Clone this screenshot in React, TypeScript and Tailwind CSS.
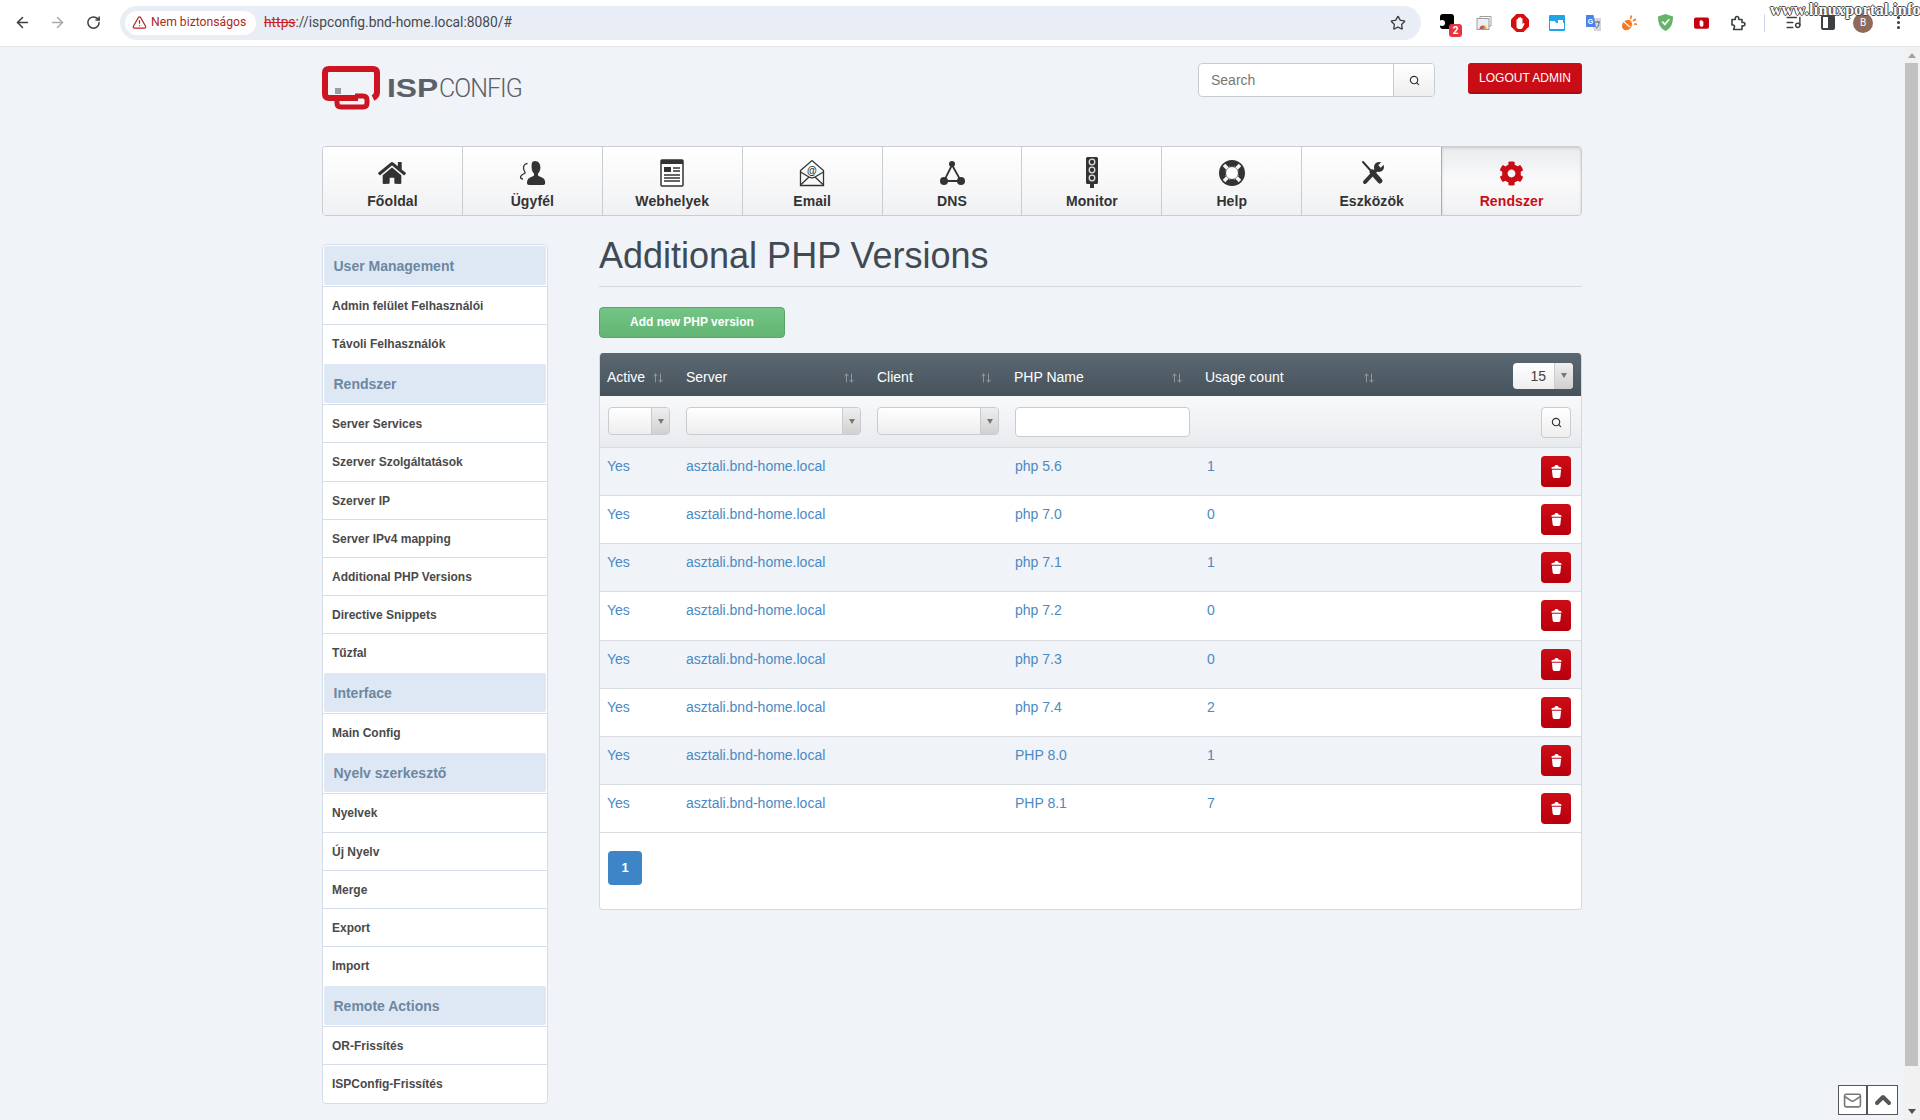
import { ArrowLeft, ArrowRight, RotateCw, Star, Search, TriangleAlert, ArrowUpDown, EllipsisVertical, ListMusic, Mail, ChevronUp } from "lucide-react";
import { FaHome, FaCog } from "react-icons/fa";
import type { ReactNode } from "react";

function UsersIcon() {
  return (
    <svg viewBox="0 0 28 28" className="w-[28px] h-[28px]" fill="#333">
      <path d="M17 2c3.4 0 5.4 2.8 5.4 6.4 0 2.6-1 4.8-2.4 6.2v1.6c0 1 3.2 1.6 5.2 3 1.4 1 2 2.6 2 4.8 0 1.2-.8 2-2 2H11c-1.2 0-2-.8-2-2 0-2.2.6-3.8 2-4.800 2-1.400 5-2 5-3v-1.600c-1.400-1.400-2.400-3.600-2.400-6.200C13.600 4.800 13.600 2 17 2z" />
      <path d="M9.500 4.500C7 4.500 5.500 6.500 5.500 9c0 1.800.7 3.200 1.500 4.200v1c-1.800 1-4.500 1.800-4.500 4 0 1.200 1 1.800 2.500 1.800" fill="none" stroke="#333" strokeWidth="1.300" />
    </svg>
  );
}

function WebIcon() {
  return (
    <svg viewBox="0 0 24 28" className="w-[24px] h-[28px]">
      <rect x="1" y="1" width="22" height="26" rx="1" fill="#fff" stroke="#333" strokeWidth="1.500" />
      <rect x="1" y="1" width="22" height="4" fill="#333" />
      <rect x="4" y="8" width="7" height="5" fill="#333" />
      <path d="M13 9h7M13 12h7M4 16h16M4 19h16M4 22h16" stroke="#333" strokeWidth="1.500" />
    </svg>
  );
}

function EmailIcon() {
  return (
    <svg viewBox="0 0 26 28" className="w-[26px] h-[28px]" fill="none" stroke="#333" strokeWidth="1.300">
      <path d="M1.500 11.500 13 1.500l11.500 10V26.500h-23z" />
      <path d="M1.500 26 10 18M24.500 26 16 18M1.500 13 10 18c2 1.200 4 1.200 6 0l8.500-5" />
      <text x="13" y="14.500" textAnchor="middle" fontSize="10" fontWeight="700" fontFamily="Liberation Sans" fill="#333" stroke="none">@</text>
    </svg>
  );
}

function DnsIcon() {
  return (
    <svg viewBox="0 0 28 28" className="w-[28px] h-[28px]" fill="#333">
      <path d="M14 6 6 22h17z" fill="none" stroke="#333" strokeWidth="1.800" />
      <circle cx="14" cy="5" r="3" />
      <circle cx="6" cy="22" r="4" />
      <circle cx="23" cy="22" r="4" />
    </svg>
  );
}

function TrafficIcon() {
  return (
    <svg viewBox="0 0 14 32" className="w-[14px] h-[32px]">
      <rect x="1" y="0" width="12" height="27" rx="1.500" fill="#333" />
      <rect x="5" y="27" width="4" height="4" fill="#333" />
      <circle cx="7" cy="5" r="2.800" fill="none" stroke="#ddd" strokeWidth="1.300" />
      <circle cx="7" cy="13" r="2.800" fill="none" stroke="#ddd" strokeWidth="1.300" />
      <circle cx="7" cy="21" r="2.800" fill="none" stroke="#ddd" strokeWidth="1.300" />
    </svg>
  );
}

function LifeRingIcon() {
  return (
    <svg viewBox="0 0 26 26" className="w-[26px] h-[26px]">
      <circle cx="13" cy="13" r="10" fill="#fff" stroke="#333" strokeWidth="6" />
      <circle cx="13" cy="13" r="6.500" fill="none" stroke="#333" strokeWidth="1" />
      <path d="M5 5l3.500 3.500M21 5l-3.500 3.500M5 21l3.500-3.500M21 21l-3.500-3.500" stroke="#f4f5f6" strokeWidth="3.500" />
    </svg>
  );
}

function ToolsIcon() {
  return (
    <svg viewBox="0 0 26 26" className="w-[26px] h-[26px]" fill="none" stroke="#333" strokeLinecap="round">
      <path d="M4 2 13 12" strokeWidth="2" />
      <path d="M13 12 21 21" strokeWidth="5" />
      <path d="M19 8 6 22" strokeWidth="4" />
      <circle cx="20" cy="7" r="5" fill="#333" stroke="none" />
      <path d="M20.500 6.500 25 2" stroke="#f8f8f8" strokeWidth="3.500" strokeLinecap="butt" />
    </svg>
  );
}

function TrashIcon() {
  return (
    <svg viewBox="0 0 12 14" className="w-[11px] h-[13px]" fill="#fff">
      <path d="M4 1.500C4 .6 4.800 0 6 0s2 .6 2 1.500c1.800.2 3.500.7 3.500 1.500V4H.5V3c0-.8 1.700-1.300 3.500-1.500z" />
      <path d="M1 5h10l-.8 7.500c-.1 1-.8 1.500-1.700 1.500h-5c-.9 0-1.600-.5-1.700-1.500z" />
    </svg>
  );
}

function PuzzleIcon() {
  return (
    <svg viewBox="0 0 16 16" className="w-[16px] h-[16px]" fill="none" stroke="#3c4043" strokeWidth="1.600" strokeLinejoin="round">
      <path d="M2 4.500h3.300V3.200a1.700 1.700 0 0 1 3.400 0v1.300H12v3h1.300a1.700 1.700 0 0 1 0 3.400H12v3.600H3.500l.9-2.200c.5-1.200-.3-2.300-1.400-2.300H2z" />
    </svg>
  );
}

function Logo() {
  return (
    <div className="flex items-center">
      <svg viewBox="0 0 58 44" className="w-[58px] h-[44px]" fill="none" stroke="#cd1521" strokeWidth="6">
        <path d="M36 32H7Q3 32 3 28V7q0-4 4-4H51q4 0 4 4V26q0 4-4 6" />
        <path d="M15 33v4q0 4 4 4H41q4 0 4-4V34q0-4-4-4H33" strokeWidth="5" />
        <rect x="13" y="22" width="6" height="6" fill="#9a9ea2" stroke="none" />
      </svg>
      <span className="ml-[7px] w-[52px] inline-block origin-left scale-x-[1.27] text-[25px] leading-none font-bold text-[#5a6168]">ISP</span>
      <span className="font-['Roboto'] font-light text-[25px] leading-none tracking-[-1px] text-[#5a6168]">CONFIG</span>
    </div>
  );
}

function Ext({ children }: { children: ReactNode }) {
  return <div className="w-[36.2px] h-[46px] flex items-center justify-center relative">{children}</div>;
}

function ChromeBar() {
  return (
    <div className="h-[47px] bg-white border-b border-[#e4e6ea] flex items-center font-['Roboto'] pl-[5px] pb-[1px] shrink-0">
      <div className="w-[35px] flex justify-center"><ArrowLeft size={17} color="#3c4043" strokeWidth={2.2} /></div>
      <div className="w-[35px] flex justify-center"><ArrowRight size={17} color="#a8abae" strokeWidth={2.2} /></div>
      <div className="w-[36px] flex justify-center"><RotateCw size={15} color="#3c4043" strokeWidth={2.4} /></div>
      <div className="ml-[9px] w-[1301px] h-[34px] rounded-full bg-[#e9edf6] flex items-center pl-[5px] pr-[15px]">
        <div className="w-[131px] h-[24px] rounded-full bg-white flex items-center pl-[7px] gap-[4px] text-[12.2px] text-[#b3261e]">
          <TriangleAlert size={15} strokeWidth={2} />
          <span>Nem biztonságos</span>
        </div>
        <div className="ml-[8px] text-[13.800px] text-[#45494d]">
          <span className="text-[#c5221f] line-through">https</span>
          <span>://ispconfig.bnd-home.local:8080/#</span>
        </div>
        <Star size={16} className="ml-auto" color="#3c4043" strokeWidth={2} />
      </div>
      <div className="ml-[9px] flex items-center">
        <Ext>
          <div className="w-[14px] h-[15px] rounded-[3px] bg-black mb-[3px] mr-[3px] flex items-center">
            <div className="w-[6px] h-[6px] rounded-full bg-white ml-[-1px] mt-[3px]" />
          </div>
          <span className="absolute left-[19px] top-[24px] w-[13px] h-[13px] rounded-[3px] bg-[#e8343f] text-white text-[10px] leading-[13px] font-bold text-center">2</span>
        </Ext>
        <Ext>
          <svg viewBox="0 0 16 16" className="w-[16px] h-[16px]" fill="none">
            <path d="M4 3V1.500h11V11h-2" stroke="#9a9ea2" strokeWidth="1" />
            <rect x="1" y="3.500" width="12" height="11" fill="#eceef0" stroke="#9a9ea2" />
            <path d="M3.500 14a3.500 3.500 0 0 1 7 0z" fill="#e4493c" />
            <path d="M5.500 14a1.500 1.500 0 0 1 3 0z" fill="#4a90d9" />
            <path d="M8 10.600a3.500 3.500 0 0 1 2.500 3.400H8.500z" fill="#f5c02e" />
          </svg>
        </Ext>
        <Ext>
          <svg viewBox="0 0 18 18" className="w-[18px] h-[18px]">
            <path d="M5.500 0h7L18 5.500v7L12.500 18h-7L0 12.500v-7z" fill="#d80d0d" />
            <path d="M5.500 8V5.500a1 1 0 0 1 1.500 0V4a1 1 0 0 1 1.500 0v-.5a1 1 0 0 1 1.500 0V4.500a1 1 0 0 1 1.500 0V10l1-1a1 1 0 0 1 1 1l-2 4c-.5.8-1 1-2 1H8c-1.500 0-2.500-1-2.500-2.500z" fill="#fff" />
          </svg>
        </Ext>
        <Ext>
          <svg viewBox="0 0 16 16" className="w-[16px] h-[16px]">
            <rect width="16" height="16" rx="1" fill="#1fa6e8" />
            <path d="M1 6h5l1 2h8v6H1z" fill="#fff" />
            <rect x="9" y="5" width="5" height="3" fill="#fff" />
          </svg>
        </Ext>
        <Ext>
          <svg viewBox="0 0 16 16" className="w-[16px] h-[16px]">
            <path d="M6 3h10v13H9z" fill="#d5d7dd" />
            <path d="M10 7h5M12.500 6v1M11 13c2 0 3-3 3-6" stroke="#5a6a8a" strokeWidth="1" fill="none" />
            <path d="M1 0h7.500L11 12H1z" fill="#4b84e6" />
            <text x="5.500" y="9" textAnchor="middle" fontSize="7" fontWeight="700" fontFamily="Liberation Sans" fill="#fff">G</text>
          </svg>
        </Ext>
        <Ext>
          <svg viewBox="0 0 16 16" className="w-[16px] h-[16px]">
            <ellipse cx="6" cy="10" rx="4.600" ry="5.600" transform="rotate(40 6 10)" fill="#f57a1f" />
            <path d="M2.500 6.500 9 12" stroke="#fff" strokeWidth="1.200" />
            <path d="M9.500 4 10.500 .5M12 6l3-2M13 9l3 .3" stroke="#f57a1f" strokeWidth="1.600" />
          </svg>
        </Ext>
        <Ext>
          <svg viewBox="0 0 16 18" className="w-[15px] h-[17px]">
            <path d="M8 0l8 2.500c0 7-1.500 12-8 15.500C1.500 14.500 0 9.500 0 2.500z" fill="#68b36b" />
            <path d="M4.500 8 7.300 11 12 5.500" stroke="#fff" strokeWidth="1.800" fill="none" />
          </svg>
        </Ext>
        <Ext>
          <svg viewBox="0 0 16 12" className="w-[15px] h-[12px]">
            <rect width="16" height="12" rx="2" fill="#c5000f" />
            <path d="M6 5.500V4a.6.6 0 0 1 1-.3V3a.6.6 0 0 1 1 0V3.500a.6.6 0 0 1 1 .2V4.500a.6.6 0 0 1 1 0V8c0 1.200-.7 2-2 2-1.100 0-1.600-.6-2-1.500z" fill="#fff" />
          </svg>
        </Ext>
        <Ext><PuzzleIcon /></Ext>
      </div>
      <div className="ml-[8px] w-[1px] h-[18px] bg-[#cfd8ea]" />
      <div className="ml-[11px] w-[35px] flex justify-center"><ListMusic size={17} color="#3c4043" strokeWidth={2} /></div>
      <div className="w-[35px] flex justify-center">
        <div className="w-[14px] h-[15px] border-2 border-[#3c4043] rounded-[2px] flex justify-end"><div className="w-[5px] h-full bg-[#3c4043]" /></div>
      </div>
      <div className="w-[35px] flex justify-center">
        <div className="w-[20px] h-[20px] rounded-full bg-[#8d6a5b] text-white text-[10px] leading-[20px] text-center">B</div>
      </div>
      <div className="w-[35px] flex justify-center"><EllipsisVertical size={17} color="#3c4043" strokeWidth={2.4} /></div>
    </div>
  );
}

const navItems: { label: string; icon: ReactNode; active?: boolean }[] = [
  { label: "Főoldal", icon: <FaHome className="w-[28px] h-[28px]" color="#333" /> },
  { label: "Ügyfél", icon: <UsersIcon /> },
  { label: "Webhelyek", icon: <WebIcon /> },
  { label: "Email", icon: <EmailIcon /> },
  { label: "DNS", icon: <DnsIcon /> },
  { label: "Monitor", icon: <TrafficIcon /> },
  { label: "Help", icon: <LifeRingIcon /> },
  { label: "Eszközök", icon: <ToolsIcon /> },
  { label: "Rendszer", icon: <FaCog className="w-[25px] h-[25px]" color="#c80d17" />, active: true },
];

const sideMenu: { title: string; items: string[] }[] = [
  { title: "User Management", items: ["Admin felület Felhasználói", "Távoli Felhasználók"] },
  { title: "Rendszer", items: ["Server Services", "Szerver Szolgáltatások", "Szerver IP", "Server IPv4 mapping", "Additional PHP Versions", "Directive Snippets", "Tűzfal"] },
  { title: "Interface", items: ["Main Config"] },
  { title: "Nyelv szerkesztő", items: ["Nyelvek", "Új Nyelv", "Merge", "Export", "Import"] },
  { title: "Remote Actions", items: ["OR-Frissítés", "ISPConfig-Frissítés"] },
];

const phpRows = [
  { name: "php 5.6", count: 1 },
  { name: "php 7.0", count: 0 },
  { name: "php 7.1", count: 1 },
  { name: "php 7.2", count: 0 },
  { name: "php 7.3", count: 0 },
  { name: "php 7.4", count: 2 },
  { name: "PHP 8.0", count: 1 },
  { name: "PHP 8.1", count: 7 },
];

const gridCols = "grid grid-cols-[79px_191px_137px_191px_192px_1fr]";

function Caret() {
  return <div className="w-0 h-0 border-x-[3px] border-x-transparent border-t-[5px] border-t-[#777]" />;
}

function FilterSelect({ className }: { className: string }) {
  return (
    <div className={`h-[28px] flex rounded-[4px] border border-[#c8ccd0] overflow-hidden bg-gradient-to-b from-white to-[#eeeeee] ${className}`}>
      <div className="flex-1" />
      <div className="w-[18px] border-l border-[#c8ccd0] bg-gradient-to-b from-[#efefef] to-[#d0d0d0] flex items-center justify-center"><Caret /></div>
    </div>
  );
}

function HeadCell({ label }: { label: string }) {
  return (
    <div className="flex items-center justify-between pl-[7px] pr-[15px] pt-[6px]">
      <span>{label}</span>
      <ArrowUpDown size={12} color="#a3abb2" strokeWidth={1.5} />
    </div>
  );
}

function PhpTable() {
  return (
    <div className="mt-[15px] w-[983px] rounded-[4px] border border-[#d5d9dd] border-t-0 bg-white overflow-hidden">
      <div className={`${gridCols} h-[43px] bg-gradient-to-b from-[#5b6771] to-[#47535c] text-white text-[14px]`}>
        <HeadCell label="Active" />
        <HeadCell label="Server" />
        <HeadCell label="Client" />
        <HeadCell label="PHP Name" />
        <HeadCell label="Usage count" />
        <div className="flex items-center justify-end pr-[8px] pt-[2px]">
          <div className="w-[60px] h-[26px] flex rounded-[4px] overflow-hidden bg-gradient-to-b from-white to-[#eeeeee] text-[#444]">
            <div className="flex-1 text-right pr-[8px] leading-[26px]">15</div>
            <div className="w-[19px] border-l border-[#c8ccd0] bg-gradient-to-b from-[#efefef] to-[#d0d0d0] flex items-center justify-center"><Caret /></div>
          </div>
        </div>
      </div>
      <div className={`${gridCols} h-[52px] pt-[11px] bg-gradient-to-b from-[#f8f9fb] to-[#e8ebee] border-b border-[#d9dde1]`}>
        <div className="pl-[8px]"><FilterSelect className="w-[62px]" /></div>
        <div className="pl-[7px]"><FilterSelect className="w-[175px]" /></div>
        <div className="pl-[7px]"><FilterSelect className="w-[122px]" /></div>
        <div className="pl-[8px]"><div className="w-[175px] h-[30px] rounded-[4px] border border-[#c8ccd0] bg-white" /></div>
        <div />
        <div className="flex justify-end pr-[10px]">
          <div className="w-[30px] h-[31px] rounded-[4px] border border-[#c8ccd0] bg-gradient-to-b from-white to-[#eeeeee] flex items-center justify-center"><Search size={11} color="#333" strokeWidth={2.5} /></div>
        </div>
      </div>
      {phpRows.map((row, i) => (
        <div key={row.name} className={`${gridCols} h-[48.15px] border-b border-[#d9dde1] text-[14px] leading-[20px] text-[#4a8ac4] ${i % 2 === 0 ? "bg-[#f0f3f7]" : "bg-white"}`}>
          <div className="pl-[7px] pt-[8px]">Yes</div>
          <div className="pl-[7px] pt-[8px]">asztali.bnd-home.local</div>
          <div />
          <div className="pl-[8px] pt-[8px]">{row.name}</div>
          <div className="pl-[9px] pt-[8px]">{row.count}</div>
          <div className="flex justify-end pr-[10px] pt-[8px]">
            <div className="w-[30px] h-[31px] rounded-[4px] bg-gradient-to-b from-[#cc0d17] to-[#b8000b] flex items-center justify-center"><TrashIcon /></div>
          </div>
        </div>
      ))}
      <div className="h-[76px] pt-[18px] pl-[8px]">
        <div className="w-[34px] h-[34px] rounded-[4px] bg-[#3d85c6] text-white text-[13px] font-bold leading-[34px] text-center">1</div>
      </div>
    </div>
  );
}

export default function App() {
  return (
    <div className="relative w-[1920px] h-[1120px] overflow-hidden flex flex-col font-['Liberation_Sans',Arial,sans-serif]">
      <ChromeBar />
      <div className="flex flex-1 min-h-0">
        <main className="flex-1 bg-[#f0f3f7] pl-[322px] pt-[16px]">
          <div className="w-[1260px]">
            <header className="h-[83px] flex items-start">
              <div className="pt-[3px]"><Logo /></div>
              <div className="ml-auto flex">
                <div className="w-[237px] h-[34px] flex rounded-[4px] border border-[#c8ccd0] bg-white overflow-hidden">
                  <div className="flex-1 pl-[12px] text-[14px] leading-[32px] text-[#777]">Search</div>
                  <div className="w-[41px] border-l border-[#c8ccd0] bg-gradient-to-b from-white to-[#eeeeee] flex items-center justify-center"><Search size={11} color="#333" strokeWidth={2.5} /></div>
                </div>
                <div className="ml-[33px] w-[114px] h-[31px] rounded-[3px] bg-[#c80d17] border-b-2 border-[#aa0a12] text-white text-[12px] leading-[30px] text-center">LOGOUT ADMIN</div>
              </div>
            </header>
            <nav className="h-[70px] flex rounded-[4px] border border-[#c9cdd1] overflow-hidden">
              {navItems.map((item) => (
                <div
                  key={item.label}
                  className={`w-[140px] first:w-[139px] flex flex-col items-center border-l first:border-l-0 ${
                    item.active
                      ? "border-[#a9adb1] bg-gradient-to-b from-[#e9ebee] via-[#fafafa] to-[#f0f1f3] shadow-[inset_0_1px_3px_rgba(0,0,0,0.15)] text-[#c80d17]"
                      : "border-[#c9cdd1] bg-gradient-to-b from-white to-[#f0f1f3] text-[#333]"
                  }`}
                >
                  <div className="h-[44px] pt-[8px] flex items-center justify-center">{item.icon}</div>
                  <div className="text-[14px] font-bold leading-[20px] tracking-[0.1px]">{item.label}</div>
                </div>
              ))}
            </nav>
            <div className="mt-[28px] flex items-start">
              <aside className="w-[226px] rounded-[4px] border border-[#d5dee8] bg-white overflow-hidden">
                {sideMenu.map((group) => (
                  <div key={group.title}>
                    <div className="h-[42px] px-[1px] pt-[1px] pb-[1px] border-b border-[#d5dee8]">
                      <div className="h-full rounded-[2px] bg-[#dee8f4] pl-[9.5px] text-[14px] font-bold leading-[40px] text-[#6d87a1]">{group.title}</div>
                    </div>
                    {group.items.map((label) => (
                      <div key={label} className="h-[38.15px] pl-[9px] border-b border-[#d5dee8] last:border-b-0 text-[12px] font-bold leading-[39px] text-[#4a4a4a]">{label}</div>
                    ))}
                  </div>
                ))}
              </aside>
              <section className="ml-[51px]">
                <h1 className="text-[36px] leading-[40px] mt-[-8px] text-[#3f4a54]">Additional PHP Versions</h1>
                <div className="mt-[10px] w-[983px] border-b border-[#d5d9dd]" />
                <div className="mt-[20px] w-[186px] h-[31px] rounded-[4px] border border-[#5aa66a] bg-gradient-to-b from-[#74c585] to-[#62b574] pl-[30px] text-[12px] font-bold leading-[29px] text-white">Add new PHP version</div>
                <PhpTable />
              </section>
            </div>
          </div>
        </main>
        <div className="w-[17px] bg-[#f1f1f1] flex flex-col items-center pt-[6px] pb-[6px]">
          <div className="w-0 h-0 border-x-[4px] border-x-transparent border-b-[5px] border-b-[#a3a3a3]" />
          <div className="mt-[5px] w-[13px] h-[1003px] bg-[#c1c1c1]" />
          <div className="mt-auto w-0 h-0 border-x-[4px] border-x-transparent border-t-[5px] border-t-[#505050]" />
        </div>
      </div>
      <div className="absolute left-[1770px] top-[-2px] text-[16px] font-bold font-['Liberation_Serif'] tracking-[0.3px] text-white [text-shadow:1px_0_0_#444,-1px_0_0_#444,0_1px_0_#444,0_-1px_0_#444]">www.linuxportal.info</div>
      <div className="absolute left-[1838px] top-[1085px] flex bg-white border border-[#555]">
        <div className="w-[29px] h-[28px] flex items-center justify-center border-r-2 border-[#555]"><Mail size={19} color="#777" strokeWidth={2} /></div>
        <div className="w-[29px] h-[28px] flex items-center justify-center"><ChevronUp size={24} color="#555" strokeWidth={4} /></div>
      </div>
    </div>
  );
}
